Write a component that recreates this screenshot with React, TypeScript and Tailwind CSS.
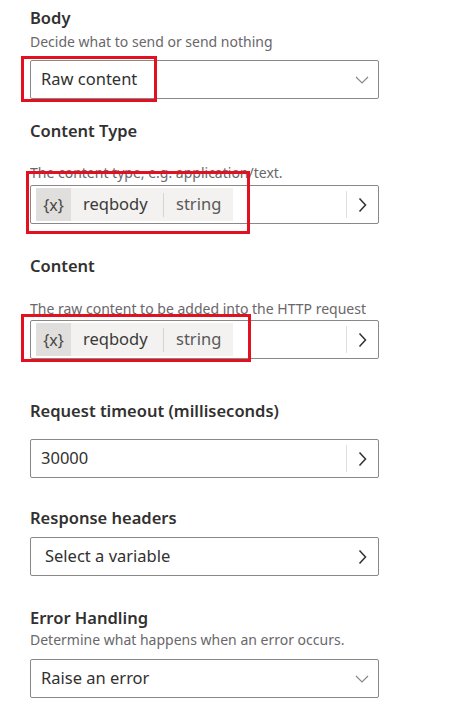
import React from "react";

const font = { fontFamily: '"Noto Sans", "Open Sans", sans-serif' };

function ChevronDown() {
  return (
    <svg width="14" height="8" viewBox="0 0 14 8" fill="none">
      <path d="M1 1l6 6 6-6" stroke="#8a8886" strokeWidth="1.2" />
    </svg>
  );
}

function ChevronRight() {
  return (
    <svg width="9" height="16" viewBox="0 0 9 16" fill="none">
      <path d="M1.5 1.5l6 6.5-6 6.5" stroke="#323130" strokeWidth="1.5" />
    </svg>
  );
}

function Label({ children, className = "" }: { children: React.ReactNode; className?: string }) {
  return (
    <div className={`text-[16.5px] leading-[22px] font-semibold text-[#323130] ${className}`}>{children}</div>
  );
}

function Desc({ children, className = "" }: { children: React.ReactNode; className?: string }) {
  return <div className={`text-[14px] leading-[20px] text-[#69676a] ${className}`}>{children}</div>;
}

function Box({ children, className = "" }: { children: React.ReactNode; className?: string }) {
  return (
    <div
      className={`relative h-[39px] w-[349px] border border-[#8a8886] rounded-[2px] bg-white flex items-center ${className}`}
    >
      {children}
    </div>
  );
}

function Token() {
  return (
    <div className="ml-[5px] h-[33px] w-[197px] flex items-center bg-[#f3f2f1] text-[16.5px] text-[#3b3a39]">
      <div className="h-full w-[35px] bg-[#e1dfdd] flex items-center justify-center text-[16px] text-[#484644]">
        {"{x}"}
      </div>
      <div className="pl-[12px] w-[92px]">reqbody</div>
      <div className="h-[24px] w-px bg-[#d6d4d2]" />
      <div className="pl-[12px] text-[#5a5856]">string</div>
    </div>
  );
}

function RightChevronTail() {
  return (
    <div className="ml-auto flex items-center h-full">
      <div className="h-[27px] w-px bg-[#e1dfdd]" />
      <div className="w-[31px] flex items-center justify-center">
        <ChevronRight />
      </div>
    </div>
  );
}

function RedRect({ className }: { className: string }) {
  return <div className={`absolute border-[3px] border-[#e3101f] pointer-events-none ${className}`} />;
}

export default function App() {
  return (
    <div className="w-[474px] h-[708px] bg-white overflow-hidden" style={font}>
      <div className="pl-[30px]">
        {/* Body */}
        <Label className="pt-[7px]">Body</Label>
        <Desc className="mt-[3px]">Decide what to send or send nothing</Desc>
        <div className="relative mt-[8px]">
          <Box>
            <span className="pl-[10px] text-[16.5px] text-[#323130]">Raw content</span>
            <div className="ml-auto mr-[9px] flex items-center">
              <ChevronDown />
            </div>
          </Box>
          <RedRect className="left-[-9px] top-[-4px] w-[136px] h-[46px]" />
        </div>

        {/* Content Type */}
        <Label className="mt-[21px]">Content Type</Label>
        <Desc className="mt-[21px]">The content type, e.g. application/text.</Desc>
        <div className="relative mt-[2px]">
          <Box>
            <Token />
            <RightChevronTail />
          </Box>
          <RedRect className="left-[-4px] top-[-14px] w-[224px] h-[63px]" />
        </div>

        {/* Content */}
        <Label className="mt-[31px]">Content</Label>
        <Desc className="mt-[22px]">The raw content to be added into the HTTP request</Desc>
        <div className="relative mt-[1px]">
          <Box>
            <Token />
            <RightChevronTail />
          </Box>
          <RedRect className="left-[-9px] top-[-6px] w-[230px] h-[48px]" />
        </div>

        {/* Request timeout */}
        <Label className="mt-[41px]">Request timeout (milliseconds)</Label>
        <Box className="mt-[17px]">
          <span className="pl-[10px] text-[16.5px] text-[#323130]">30000</span>
          <RightChevronTail />
        </Box>

        {/* Response headers */}
        <Label className="mt-[29px]">Response headers</Label>
        <Box className="mt-[8px]">
          <span className="pl-[14px] text-[16.5px] text-[#323130]">Select a variable</span>
          <div className="ml-auto w-[31px] flex items-center justify-center">
            <ChevronRight />
          </div>
        </Box>

        {/* Error Handling */}
        <Label className="mt-[31px]">Error Handling</Label>
        <Desc className="mt-[1px]">Determine what happens when an error occurs.</Desc>
        <Box className="mt-[9px]">
          <span className="pl-[10px] text-[16.5px] text-[#323130]">Raise an error</span>
          <div className="ml-auto mr-[9px] flex items-center">
            <ChevronDown />
          </div>
        </Box>
      </div>
    </div>
  );
}
